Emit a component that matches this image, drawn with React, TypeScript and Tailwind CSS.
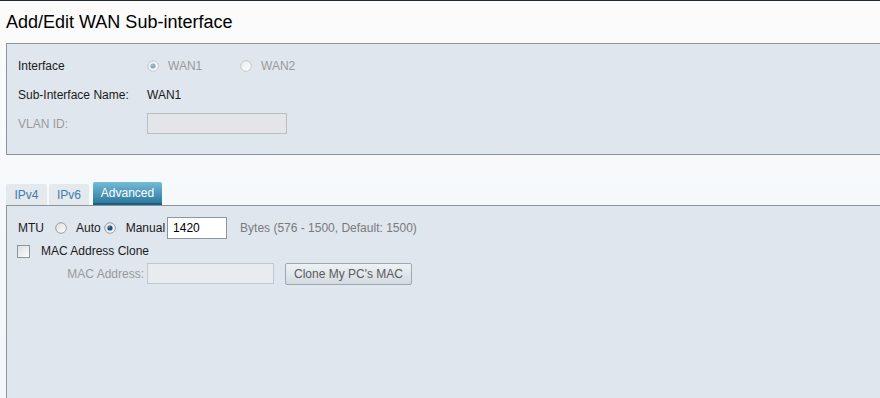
import React from "react";

function Radio({ checked, disabled }: { checked?: boolean; disabled?: boolean }) {
  const border = disabled ? "#bfc5ca" : "#8f969c";
  const dot = disabled ? "#8fa9bd" : "#1d4f7c";
  const id = `rg${checked ? 1 : 0}${disabled ? 1 : 0}`;
  return (
    <svg width="12" height="12" viewBox="0 0 12 12" className="shrink-0">
      <defs>
        <linearGradient id={id} x1="0" y1="0" x2="1" y2="1">
          <stop offset="0" stopColor={disabled ? "#e6e9ec" : "#d9dcdf"} />
          <stop offset="1" stopColor="#ffffff" />
        </linearGradient>
      </defs>
      <circle cx="6" cy="6" r="5.3" fill={`url(#${id})`} stroke={border} strokeWidth="0.9" />
      {checked && <circle cx="6" cy="6" r="2.6" fill={dot} />}
      {checked && <circle cx="5.3" cy="5.2" r="0.9" fill="#ffffff" opacity="0.35" />}
    </svg>
  );
}

export default function App() {
  const font = { fontFamily: '"Liberation Sans", Arial, sans-serif' };
  return (
    <div
      className="w-[880px] h-[398px] overflow-hidden border-t border-[#1e282e] bg-gradient-to-b from-[#fbfbfb] to-[#f1f7fb] text-[12px] text-[#1a1a1a]"
      style={font}
    >
      <div className="h-[42px] flex items-center pl-[6px] text-[18px] text-black">Add/Edit WAN Sub-interface</div>

      <div className="pl-[6px]">
        <div className="h-[112px] border-t border-b border-l border-[#8b939b] bg-[#dfe6ee] pt-[7px] pl-[11px]">
          <div className="h-[29px] flex items-center">
            <div className="w-[129px]">Interface</div>
            <div className="flex items-center w-[93px]">
              <Radio checked disabled />
              <span className="ml-[9px] text-[#9a9a9a]">WAN1</span>
            </div>
            <div className="flex items-center">
              <Radio disabled />
              <span className="ml-[9px] text-[#9a9a9a]">WAN2</span>
            </div>
          </div>
          <div className="h-[29px] flex items-center">
            <div className="w-[129px]">Sub-Interface Name:</div>
            <div>WAN1</div>
          </div>
          <div className="h-[29px] flex items-center">
            <div className="w-[129px] text-[#9a9a9a]">VLAN ID:</div>
            <div className="w-[140px] h-[21px] border border-[#b9bec3] bg-[#e3e5e8]" />
          </div>
        </div>

        <div className="flex items-end mt-[27px] h-[23px] gap-[2px]">
          <div className="h-[21px] w-[41px] flex items-center justify-center pt-[1px] bg-[#e3e9ed] text-[#3f7cab] rounded-t-[2px]">IPv4</div>
          <div className="h-[21px] w-[40px] flex items-center justify-center pt-[1px] bg-[#e3e9ed] text-[#3f7cab] rounded-t-[2px]">IPv6</div>
          <div className="ml-[2px] h-[23px] w-[69px] flex items-center justify-center bg-gradient-to-b from-[#74bbd6] to-[#2b7aa0] text-white rounded-t-[2px] border-b-2 border-[#1d5f80]">Advanced</div>
        </div>

        <div className="h-[200px] border-t border-l border-[#8b939b] bg-[#dfe6ee] pt-[11px] pl-[11px]">
          <div className="h-[22px] flex items-center">
            <span>MTU</span>
            <span className="ml-[11px]"><Radio /></span>
            <span className="ml-[9px]">Auto</span>
            <span className="ml-[3px]"><Radio checked /></span>
            <span className="ml-[10px]">Manual</span>
            <div className="ml-[2px] w-[60px] h-[22px] border border-[#8e959b] bg-white flex items-center pl-[5px] text-black">1420</div>
            <span className="ml-[13px] text-[#7a7a7a]">Bytes (576 - 1500, Default: 1500)</span>
          </div>
          <div className="h-[24px] flex items-center">
            <div className="w-[13px] h-[13px] border border-[#8e959b] bg-gradient-to-br from-[#dcdfe2] to-[#fbfbfb] -ml-[1px]" />
            <span className="ml-[11px]">MAC Address Clone</span>
          </div>
          <div className="h-[21px] flex items-center">
            <div className="w-[126px] text-right text-[#9a9a9a]">MAC Address:</div>
            <div className="ml-[3px] w-[127px] h-[21px] border border-[#c2c7cc] bg-[#e8ecf0]" />
            <div className="ml-[11px] w-[127px] h-[22px] border border-[#a0a8ae] rounded-[2px] bg-gradient-to-b from-[#eef2f5] to-[#d3dbe1] text-[#5a5a5a] flex items-center justify-center">
              Clone My PC's MAC
            </div>
          </div>
        </div>
      </div>
    </div>
  );
}
